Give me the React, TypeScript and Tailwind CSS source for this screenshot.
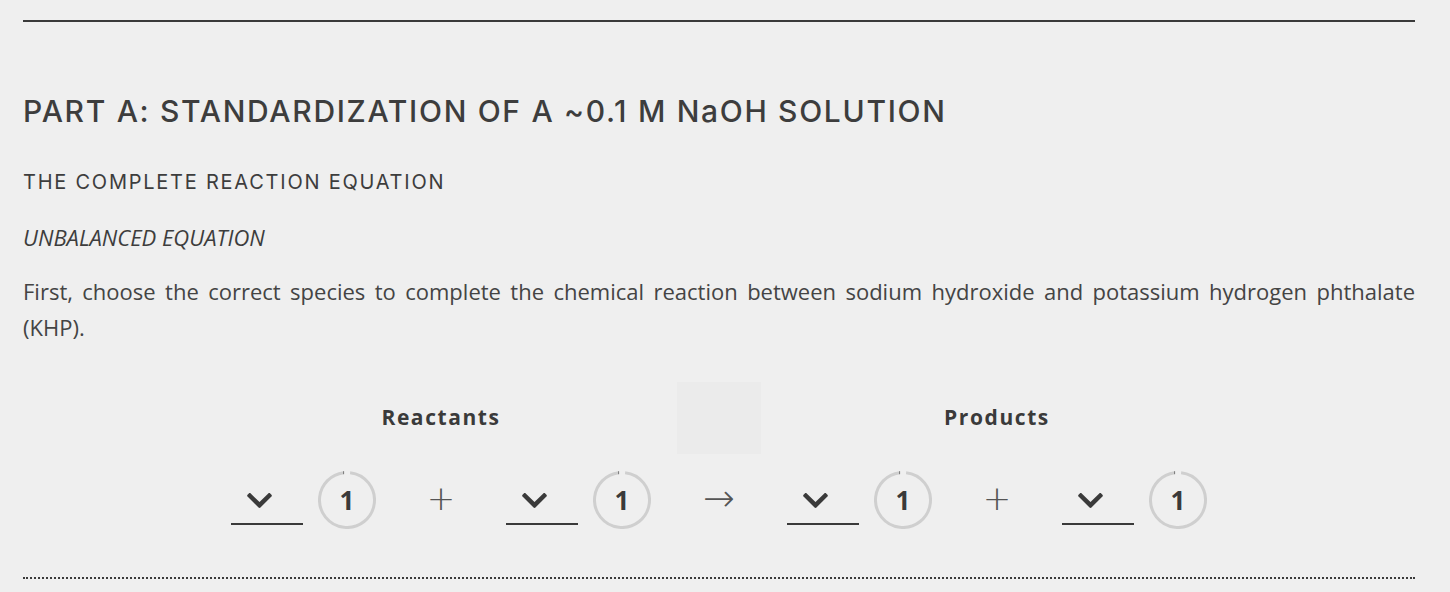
import { FaChevronDown } from "react-icons/fa";

function Ring({ value }: { value: number }) {
  return (
    <div className="relative flex h-[58px] w-[58px] shrink-0 items-center justify-center">
      <svg className="absolute inset-0" width="58" height="58" viewBox="0 0 58 58">
        <circle
          cx="29"
          cy="29"
          r="27.5"
          fill="none"
          stroke="#cfcfcf"
          strokeWidth="3"
          strokeDasharray="166 6.8"
          transform="rotate(-83.5 29 29)"
        />
        <line x1="25.6" y1="0.2" x2="25.6" y2="3.2" stroke="#777" strokeWidth="1" />
      </svg>
      <span className="relative font-['Open_Sans',sans-serif] text-[26px] font-bold leading-none text-[#3a3a3a]">
        {value}
      </span>
    </div>
  );
}

function Species() {
  return (
    <div className="flex items-center">
      <div className="flex h-[50px] w-[72px] items-center border-b-2 border-[#3a3a3a] pl-[14px] pt-[2px]">
        <FaChevronDown size={29} color="#3a3a3a" />
      </div>
      <div className="ml-[15px]">
        <Ring value={1} />
      </div>
    </div>
  );
}

function Side({ label }: { label: string }) {
  return (
    <div className="flex flex-col">
      <div className="flex h-[72px] items-center justify-center font-['Open_Sans',sans-serif] text-[21px] font-bold tracking-[0.075em] text-[#3a3a3a]">
        {label}
      </div>
      <div className="mt-[17px] flex items-center">
        <Species />
        <div className="w-[130px] pb-[4px] text-center font-['DejaVu_Sans',sans-serif] text-[34px] font-extralight leading-none text-[#555]">
          +
        </div>
        <Species />
      </div>
    </div>
  );
}

export default function App() {
  return (
    <div className="min-h-[592px] bg-[#efefef] pt-[20px]">
      <div className="ml-[23px] w-[1392px] border-t-2 border-[#3a3a3a]">
        <h1 className="mt-[74px] font-['Inter',sans-serif] text-[30px] font-medium leading-none tracking-[0.056em] text-[#3d3d3d]">
          PART A: STANDARDIZATION OF A ~0.1 M NaOH SOLUTION
        </h1>
        <h2 className="mt-[46px] font-['Inter',sans-serif] text-[20px] font-normal leading-none tracking-[0.088em] text-[#3d3d3d]">
          THE COMPLETE REACTION EQUATION
        </h2>
        <p className="mt-[34px] font-['Open_Sans',sans-serif] text-[22px] italic leading-none text-[#3d3d3d]">
          UNBALANCED EQUATION
        </p>
        <p className="mt-[25px] text-justify font-['Open_Sans',sans-serif] text-[22px] leading-[36px] text-[#444]">
          First, choose the correct species to complete the chemical reaction between sodium hydroxide and potassium
          hydrogen phthalate (KHP).
        </p>
        <div className="mt-[37px] flex justify-center">
          <Side label="Reactants" />
          <div className="mx-[26px] flex w-[84px] flex-col">
            <div className="h-[72px] bg-[#ebebeb]" />
            <div className="mt-[17px] flex h-[58px] items-center justify-center pb-[4px] font-['DejaVu_Sans',sans-serif] text-[38px] font-extralight leading-none text-[#555]">
              →
            </div>
          </div>
          <Side label="Products" />
        </div>
        <div className="mt-[48px] border-b-2 border-dotted border-[#3a3a3a]" />
      </div>
    </div>
  );
}
